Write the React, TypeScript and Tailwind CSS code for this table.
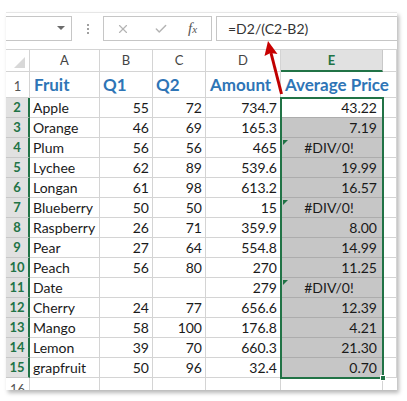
import { Check, X } from 'lucide-react'

type Row = {
  n: number
  fruit: string
  q1: string
  q2: string
  amount: string
  avg: string
}

const rows: Row[] = [
  { n: 2, fruit: 'Apple', q1: '55', q2: '72', amount: '734.7', avg: '43.22' },
  { n: 3, fruit: 'Orange', q1: '46', q2: '69', amount: '165.3', avg: '7.19' },
  { n: 4, fruit: 'Plum', q1: '56', q2: '56', amount: '465', avg: '#DIV/0!' },
  { n: 5, fruit: 'Lychee', q1: '62', q2: '89', amount: '539.6', avg: '19.99' },
  { n: 6, fruit: 'Longan', q1: '61', q2: '98', amount: '613.2', avg: '16.57' },
  { n: 7, fruit: 'Blueberry', q1: '50', q2: '50', amount: '15', avg: '#DIV/0!' },
  { n: 8, fruit: 'Raspberry', q1: '26', q2: '71', amount: '359.9', avg: '8.00' },
  { n: 9, fruit: 'Pear', q1: '27', q2: '64', amount: '554.8', avg: '14.99' },
  { n: 10, fruit: 'Peach', q1: '56', q2: '80', amount: '270', avg: '11.25' },
  { n: 11, fruit: 'Date', q1: '', q2: '', amount: '279', avg: '#DIV/0!' },
  { n: 12, fruit: 'Cherry', q1: '24', q2: '77', amount: '656.6', avg: '12.39' },
  { n: 13, fruit: 'Mango', q1: '58', q2: '100', amount: '176.8', avg: '4.21' },
  { n: 14, fruit: 'Lemon', q1: '39', q2: '70', amount: '660.3', avg: '21.30' },
  { n: 15, fruit: 'grapfruit', q1: '50', q2: '96', amount: '32.4', avg: '0.70' },
]

const cell = 'border-r border-b border-[#d4d4d4] shrink-0'

function DataRow({ r }: { r: Row }) {
  const isErr = r.avg.startsWith('#')
  return (
    <div className="flex h-[20px] text-[14px] leading-[19px] text-[#1a1a1a]">
      <div className="w-[24px] shrink-0 border-b border-[#c8c8c8] border-r-2 border-r-[#217346] bg-[#e1e1e1] text-center text-[13px] font-bold text-[#217346]">
        {r.n}
      </div>
      <div className={`${cell} w-[70px] pl-[3px]`}>{r.fruit}</div>
      <div className={`${cell} w-[53px] pr-[3px] text-right`}>{r.q1}</div>
      <div className={`${cell} w-[53px] pr-[3px] text-right`}>{r.q2}</div>
      <div className={`${cell} w-[75px] pr-[3px] text-right`}>{r.amount}</div>
      <div
        className={`relative w-[102px] shrink-0 border-b border-r border-[#acacac] pr-[5px] ${
          r.n === 2 ? 'bg-white' : 'bg-[#c6c6c6]'
        } ${isErr ? 'text-center' : 'text-right'}`}
      >
        {isErr && (
          <span className="absolute left-[2px] top-[2px] h-0 w-0 border-r-[5px] border-t-[5px] border-r-transparent border-t-[#217346]" />
        )}
        {r.avg}
      </div>
      <div className={`${cell} flex-1`} />
    </div>
  )
}

export default function App() {
  return (
    <div className="h-[401px] w-[407px] bg-white pl-[6px] pt-[12px] font-['Lato',sans-serif]">
      <div className="relative h-[378px] w-[391px] overflow-hidden border-t border-[#e6e6e6] bg-white shadow-[2px_3px_4px_rgba(0,0,0,0.28)]">
        {/* formula bar */}
        <div className="flex h-[37px] items-start border-b border-[#d4d4d4] pt-[3px]">
          <div className="relative h-[25px] w-[66px] border-y border-r border-[#c6c6c6]">
            <span className="absolute right-[6px] top-[9px] h-0 w-0 border-x-[4px] border-t-[4px] border-x-transparent border-t-[#6b6b6b]" />
          </div>
          <div className="flex h-[25px] w-[31px] flex-col items-center justify-center gap-[2px]">
            <span className="h-[2px] w-[2px] bg-[#a0a0a0]" />
            <span className="h-[2px] w-[2px] bg-[#a0a0a0]" />
            <span className="h-[2px] w-[2px] bg-[#a0a0a0]" />
          </div>
          <div className="flex h-[25px] w-[109px] items-center border border-[#c6c6c6]">
            <X className="ml-[12px] h-[14px] w-[14px] text-[#b4b4b4]" strokeWidth={2} />
            <Check className="ml-[24px] h-[14px] w-[14px] text-[#b4b4b4]" strokeWidth={2.5} />
            <span className="ml-[20px] font-['Liberation_Serif',serif] text-[15px] italic text-[#555]">
              f<span className="text-[11px]">x</span>
            </span>
          </div>
          <div className="ml-[4px] flex h-[25px] flex-1 items-center border-y border-l border-[#c6c6c6] pl-[11px] text-[14px] text-[#333]">
            =D2/(C2-B2)
          </div>
        </div>

        {/* column headers */}
        <div className="flex h-[22px] text-[13px] leading-[21px] text-[#444]">
          <div className="relative w-[24px] shrink-0 border-b border-r border-[#d4d4d4]">
            <span className="absolute bottom-[3px] right-[4px] h-0 w-0 border-b-[11px] border-l-[11px] border-b-[#d8d8d8] border-l-transparent" />
          </div>
          <div className={`${cell} w-[70px] text-center`}>A</div>
          <div className={`${cell} w-[53px] text-center`}>B</div>
          <div className={`${cell} w-[53px] text-center`}>C</div>
          <div className={`${cell} w-[75px] text-center`}>D</div>
          <div className="w-[102px] shrink-0 border-b-2 border-r border-b-[#217346] border-r-[#c8c8c8] bg-[#e1e1e1] text-center font-bold text-[#217346]">
            E
          </div>
          <div className={`${cell} flex-1`} />
        </div>

        {/* row 1 headings */}
        <div className="flex h-[26px] text-[17px] font-bold leading-[25px] text-[#2e75b6]">
          <div className="w-[24px] shrink-0 border-b border-r border-[#d4d4d4] pt-[2px] text-center text-[13px] font-normal text-[#555]">
            1
          </div>
          <div className={`${cell} w-[70px] pl-[4px]`}>Fruit</div>
          <div className={`${cell} w-[53px] pl-[3px]`}>Q1</div>
          <div className={`${cell} w-[53px] pl-[3px]`}>Q2</div>
          <div className={`${cell} w-[75px] pl-[4px]`}>Amount</div>
          <div className="w-[102px] shrink-0 overflow-visible whitespace-nowrap border-b border-[#d4d4d4] pl-[4px]">
            Average Price
          </div>
          <div className={`${cell} flex-1 border-l-0`} />
        </div>

        {rows.map((r) => (
          <DataRow key={r.n} r={r} />
        ))}

        {/* row 16 */}
        <div className="flex h-[20px] text-[14px] leading-[19px]">
          <div className="w-[24px] shrink-0 border-r border-[#d4d4d4] pt-[2px] text-center text-[13px] text-[#555]">16</div>
          <div className={`${cell} w-[70px] border-b-0`} />
          <div className={`${cell} w-[53px] border-b-0`} />
          <div className={`${cell} w-[53px] border-b-0`} />
          <div className={`${cell} w-[75px] border-b-0`} />
          <div className={`${cell} w-[102px] border-b-0`} />
          <div className="flex-1" />
        </div>

        {/* selection outline E2:E15 */}
        <div className="pointer-events-none absolute left-[274px] top-[84px] h-[282px] w-[104px] border-2 border-[#217346]">
          <span className="absolute -bottom-[4px] -right-[4px] h-[6px] w-[6px] border border-white bg-[#217346]" />
        </div>

        {/* red arrow */}
        <svg className="pointer-events-none absolute left-0 top-0" width="391" height="378">
          <line x1="265" y1="40" x2="275.5" y2="81" stroke="#c00000" strokeWidth="3" />
          <polygon points="262,28 271.5,41 264.5,40 258.5,43" fill="#c80000" />
        </svg>
      </div>
    </div>
  )
}
